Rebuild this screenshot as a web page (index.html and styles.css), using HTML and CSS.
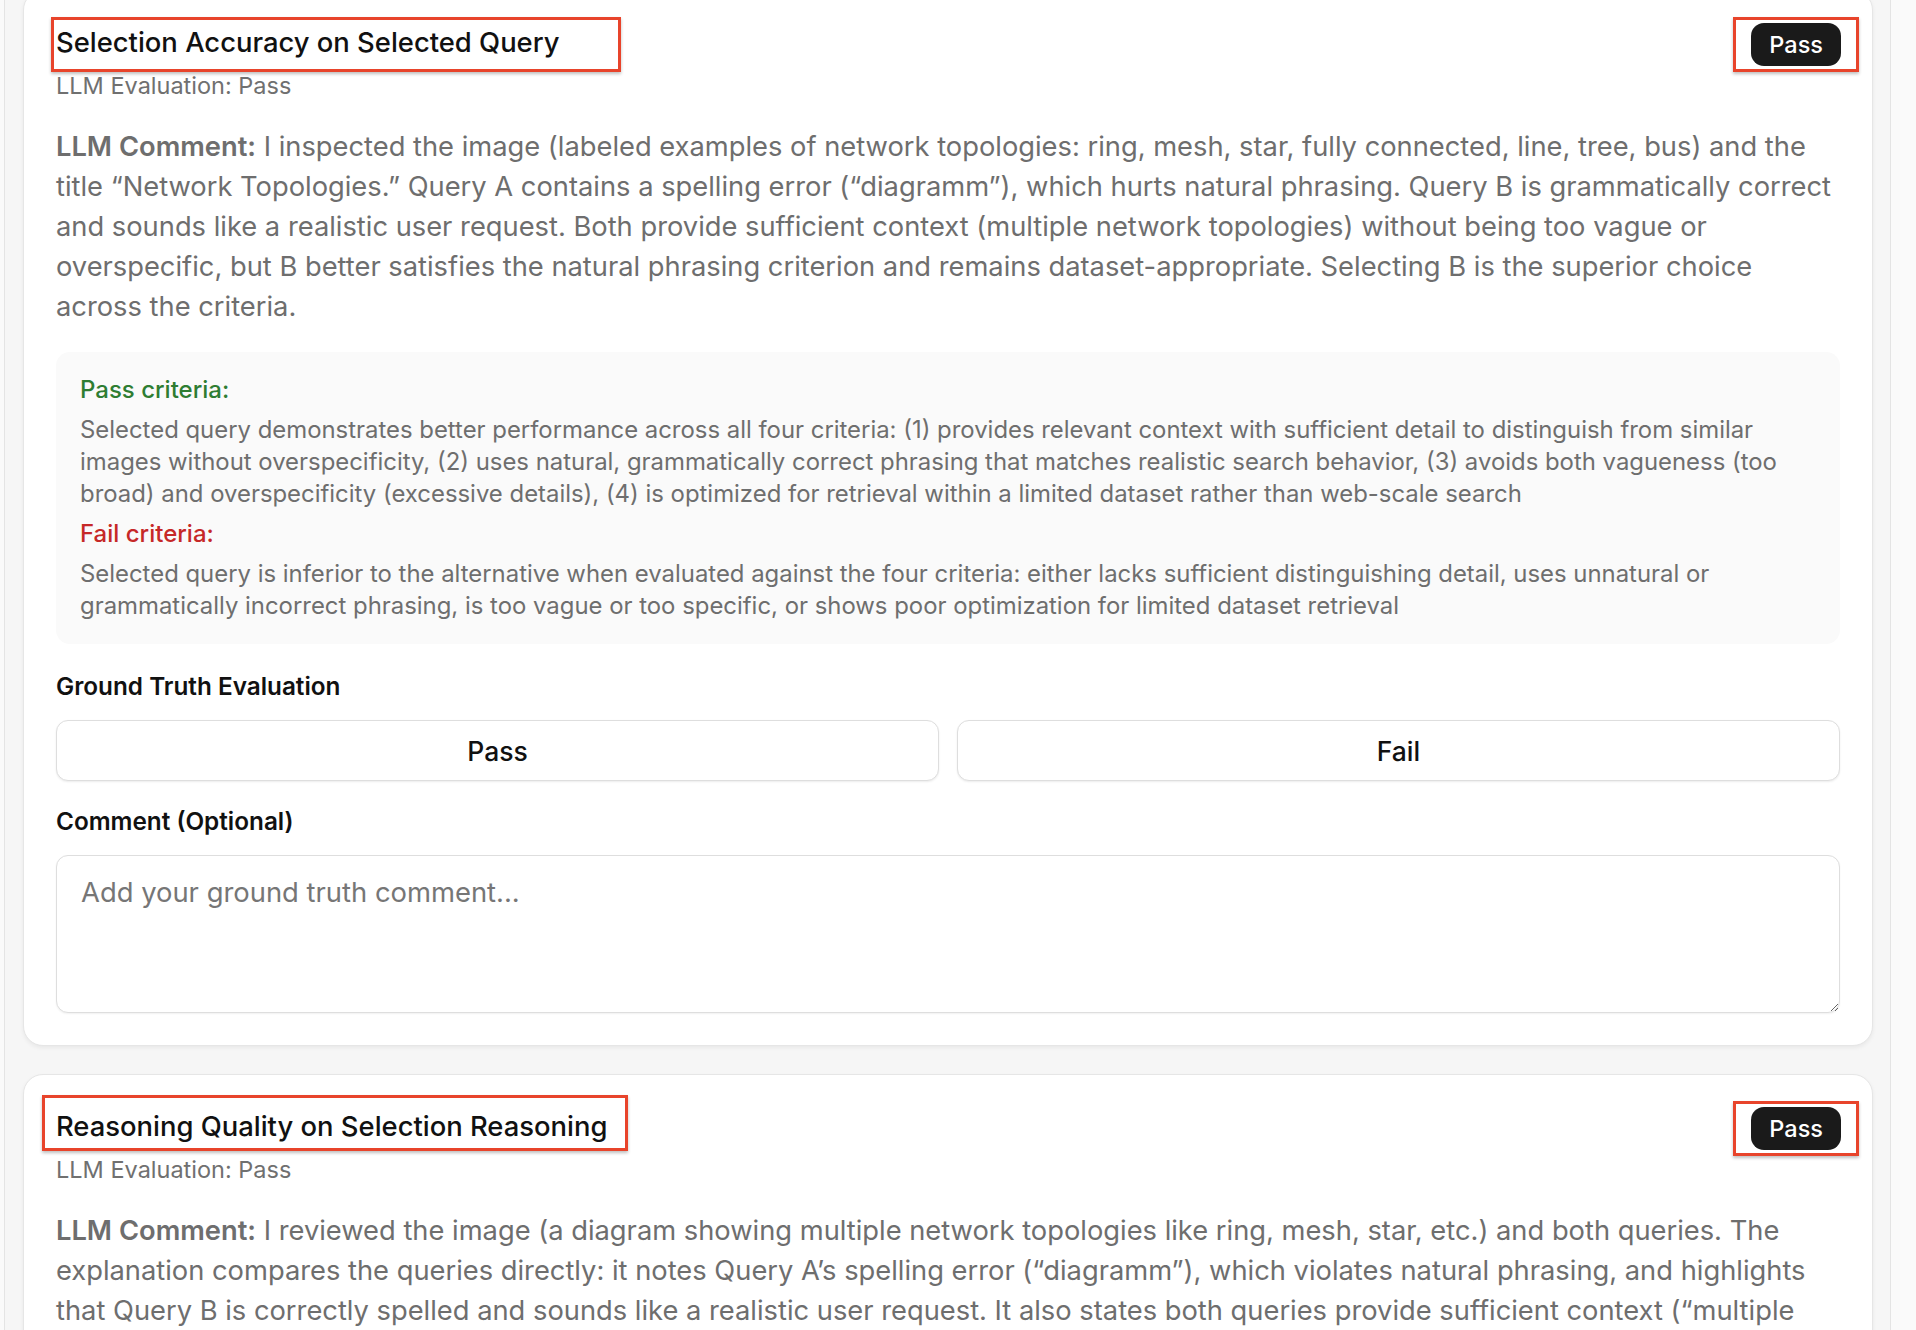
FILE: index.html
```html
<!DOCTYPE html>
<html lang="en">
<head>
  <meta charset="UTF-8">
  <title>Evaluation Review</title>
  <meta name="viewport" content="width=device-width, initial-scale=1.0">
  <link rel="stylesheet" href="styles.css">
</head>
<body>
  <div class="painel">
    <div class="cartao">
      <span class="marca marca-titulo-a"></span>
      <span class="marca marca-badge"></span>
      <div class="cabecalho">
        <h2 class="titulo">Selection Accuracy on Selected Query</h2>
        <span class="badge">Pass</span>
      </div>
      <div class="avaliacao">LLM Evaluation: Pass</div>
      <p class="comentario"><strong>LLM Comment:</strong> I inspected the image (labeled examples of network topologies: ring, mesh, star, fully connected, line, tree, bus) and the title “Network Topologies.” Query A contains a spelling error (“diagramm”), which hurts natural phrasing. Query B is grammatically correct and sounds like a realistic user request. Both provide sufficient context (multiple network topologies) without being too vague or overspecific, but B better satisfies the natural phrasing criterion and remains dataset-appropriate. Selecting B is the superior choice across the criteria.</p>

      <div class="criterios">
        <div class="rotulo passa">Pass criteria:</div>
        <p class="texto-criterio">Selected query demonstrates better performance across all four criteria: (1) provides relevant context with sufficient detail to distinguish from similar images without overspecificity, (2) uses natural, grammatically correct phrasing that matches realistic search behavior, (3) avoids both vagueness (too broad) and overspecificity (excessive details), (4) is optimized for retrieval within a limited dataset rather than web-scale search</p>
        <div class="rotulo falha">Fail criteria:</div>
        <p class="texto-criterio">Selected query is inferior to the alternative when evaluated against the four criteria: either lacks sufficient distinguishing detail, uses unnatural or grammatically incorrect phrasing, is too vague or too specific, or shows poor optimization for limited dataset retrieval</p>
      </div>

      <div class="secao">Ground Truth Evaluation</div>
      <div class="botoes">
        <button class="opcao">Pass</button>
        <button class="opcao">Fail</button>
      </div>

      <div class="secao">Comment (Optional)</div>
      <textarea class="caixa" placeholder="Add your ground truth comment..."></textarea>
    </div>

    <div class="cartao">
      <span class="marca marca-titulo-b"></span>
      <span class="marca marca-badge"></span>
      <div class="cabecalho">
        <h2 class="titulo">Reasoning Quality on Selection Reasoning</h2>
        <span class="badge">Pass</span>
      </div>
      <div class="avaliacao">LLM Evaluation: Pass</div>
      <p class="comentario"><strong>LLM Comment:</strong> I reviewed the image (a diagram showing multiple network topologies like ring, mesh, star, etc.) and both queries. The explanation compares the queries directly: it notes Query A’s spelling error (“diagramm”), which violates natural phrasing, and highlights that Query B is correctly spelled and sounds like a realistic user request. It also states both queries provide sufficient context (“multiple network topologies”) and that neither is too vague or overspecific, so the reasoning is clear, accurate and consistent with the selection.</p>

      <div class="criterios">
        <div class="rotulo passa">Pass criteria:</div>
        <p class="texto-criterio">Reasoning clearly explains why the selected query is better, referencing the image content and the evaluation criteria.</p>
        <div class="rotulo falha">Fail criteria:</div>
        <p class="texto-criterio">Reasoning is missing, vague, inaccurate or inconsistent with the selected query.</p>
      </div>
    </div>
  </div>
</body>
</html>
```

FILE: styles.css
```css
body {
  margin: 0;
  background: #fafafa;
  font-family: Inter, "Noto Sans", sans-serif;
  height: 1330px;
  overflow: hidden;
}
.painel {
  margin: 0 25px 0 4px;
  padding: 0 17px 0 18px;
  background: #f6f6f6;
  border-left: 1px solid #e4e4e4;
  border-right: 1px solid #e4e4e4;
  min-height: 1330px;
}
.cartao {
  position: relative;
  background: #fff;
  border: 1px solid #e6e6e6;
  border-radius: 20px;
  box-shadow: 0 2px 4px rgba(0, 0, 0, 0.06);
  padding: 32px 32px 32px 32px;
  margin-bottom: 28px;
}
.cartao:first-child {
  margin-top: -10px;
}
.cabecalho {
  display: flex;
  justify-content: space-between;
  align-items: center;
  height: 43px;
}
.titulo {
  margin: 0 0 5px;
  font-size: 27.4px;
  font-weight: 500;
  color: #111;
}
.badge {
  background: #1a1a1a;
  color: #fff;
  font-size: 23.5px;
  font-weight: 500;
  height: 43px;
  line-height: 43px;
  padding: 0 18px;
  border-radius: 13px;
  margin-right: -1px;
}
.avaliacao {
  margin-top: 6px;
  font-size: 23.5px;
  line-height: 28px;
  color: #707070;
}
.comentario {
  margin: 27px 0 0;
  font-size: 27.3px;
  line-height: 40px;
  color: #6e6e6e;
}
.comentario strong {
  font-weight: 600;
}
.criterios {
  margin-top: 25px;
  background: #fafafa;
  border-radius: 14px;
  padding: 23px 24px 22px;
}
.rotulo {
  font-size: 24px;
  font-weight: 500;
  line-height: 30px;
}
.passa {
  color: #2e7d32;
}
.falha {
  color: #c62828;
  margin-top: 9px;
}
.texto-criterio {
  margin: 9px 0 0;
  font-size: 23.9px;
  line-height: 32px;
  color: #6e6e6e;
}
.secao {
  margin-top: 27px;
  font-size: 24.3px;
  font-weight: 600;
  line-height: 30px;
  color: #111;
}
.cartao .botoes + .secao {
  margin-top: 25px;
}
.botoes {
  display: grid;
  grid-template-columns: 1fr 1fr;
  gap: 18px;
  margin-top: 19px;
}
.opcao {
  height: 61px;
  background: #fff;
  border: 1px solid #dedede;
  border-radius: 12px;
  box-shadow: 0 1px 2px rgba(0, 0, 0, 0.08);
  font-family: inherit;
  font-size: 26.5px;
  font-weight: 500;
  color: #111;
  cursor: pointer;
}
.caixa {
  display: block;
  box-sizing: border-box;
  width: 100%;
  height: 158px;
  margin-top: 19px;
  padding: 18px 24px;
  border: 1px solid #dedede;
  border-radius: 12px;
  box-shadow: 0 1px 2px rgba(0, 0, 0, 0.06);
  font-family: inherit;
  font-size: 27.4px;
  line-height: 36px;
  color: #333;
}
.caixa::placeholder {
  color: #767676;
}
.marca {
  position: absolute;
  border: 3px solid #e8442b;
  box-shadow: 0 2px 3px rgba(0, 0, 0, 0.25);
  pointer-events: none;
}
.marca-titulo-a {
  left: 27px;
  top: 26px;
  width: 564px;
  height: 49px;
}
.marca-titulo-b {
  left: 18px;
  top: 20px;
  width: 580px;
  height: 50px;
}
.marca-badge {
  left: 1709px;
  top: 26px;
  width: 120px;
  height: 49px;
}
```
